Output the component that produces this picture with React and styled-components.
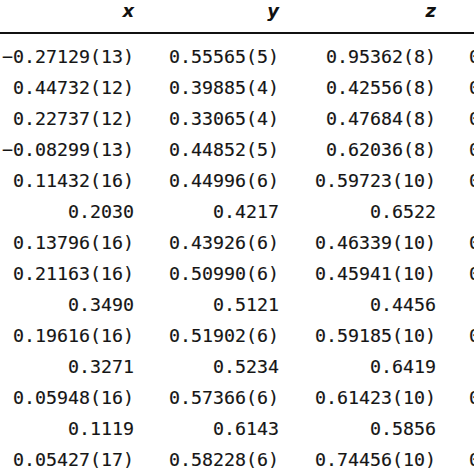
import React from "react";
import styled, { createGlobalStyle } from "styled-components";

const GlobalStyle = createGlobalStyle`
    html, body {
        margin: 0;
        padding: 0;
        background: #ffffff;
        overflow: hidden;
    }
`;

// last column runs past the right edge of the crop, only its first glyph shows
const rows = [
    ["−0.27129(13)", "0.55565(5)", "0.95362(8)", "0.0250(3)"],
    ["0.44732(12)", "0.39885(4)", "0.42556(8)", "0.0233(3)"],
    ["0.22737(12)", "0.33065(4)", "0.47684(8)", "0.0231(3)"],
    ["−0.08299(13)", "0.44852(5)", "0.62036(8)", "0.0266(3)"],
    ["0.11432(16)", "0.44996(6)", "0.59723(10)", "0.042(4)"],
    ["0.2030", "0.4217", "0.6522", ""],
    ["0.13796(16)", "0.43926(6)", "0.46339(10)", "0.038(4)"],
    ["0.21163(16)", "0.50990(6)", "0.45941(10)", "0.040(4)"],
    ["0.3490", "0.5121", "0.4456", ""],
    ["0.19616(16)", "0.51902(6)", "0.59185(10)", "0.041(4)"],
    ["0.3271", "0.5234", "0.6419", ""],
    ["0.05948(16)", "0.57366(6)", "0.61423(10)", "0.044(4)"],
    ["0.1119", "0.6143", "0.5856", ""],
    ["0.05427(17)", "0.58228(6)", "0.74456(10)", "0.046(4)"],
];

const Page = styled.div`
    width: 474px;
    height: 474px;
    overflow: hidden;
    background: #ffffff;
    color: #151515;
`;

const Grid = styled.div`
    display: grid;
    grid-template-columns: 134px 145px 157px 33px 200px;
`;

const HeadCell = styled.div`
    font-family: "DejaVu Sans", sans-serif;
    font-weight: bold;
    font-style: italic;
    font-size: 18px;
    line-height: 22px;
    height: 32px;
    text-align: right;
    color: #111;
`;

const Rule = styled.div`
    height: 2px;
    background: #111;
    margin-bottom: 7px;
`;

const Cell = styled.div`
    font-family: "DejaVu Sans Mono", monospace;
    font-size: 18.3px;
    line-height: 31px;
    height: 31px;
    white-space: nowrap;
    -webkit-text-stroke: 0.15px #151515;
    text-align: ${(p) => (p.$left ? "left" : "right")};
`;

const Spacer = styled.div``;

export default function App() {
    return (
        <Page>
            <GlobalStyle />
            <Grid>
                <HeadCell>x</HeadCell>
                <HeadCell>y</HeadCell>
                <HeadCell>z</HeadCell>
                <Spacer />
                <Spacer />
            </Grid>
            <Rule />
            <Grid>
                {rows.map((r, i) => (
                    <React.Fragment key={i}>
                        <Cell>{r[0]}</Cell>
                        <Cell>{r[1]}</Cell>
                        <Cell>{r[2]}</Cell>
                        <Spacer />
                        <Cell $left>{r[3]}</Cell>
                    </React.Fragment>
                ))}
            </Grid>
        </Page>
    );
}
